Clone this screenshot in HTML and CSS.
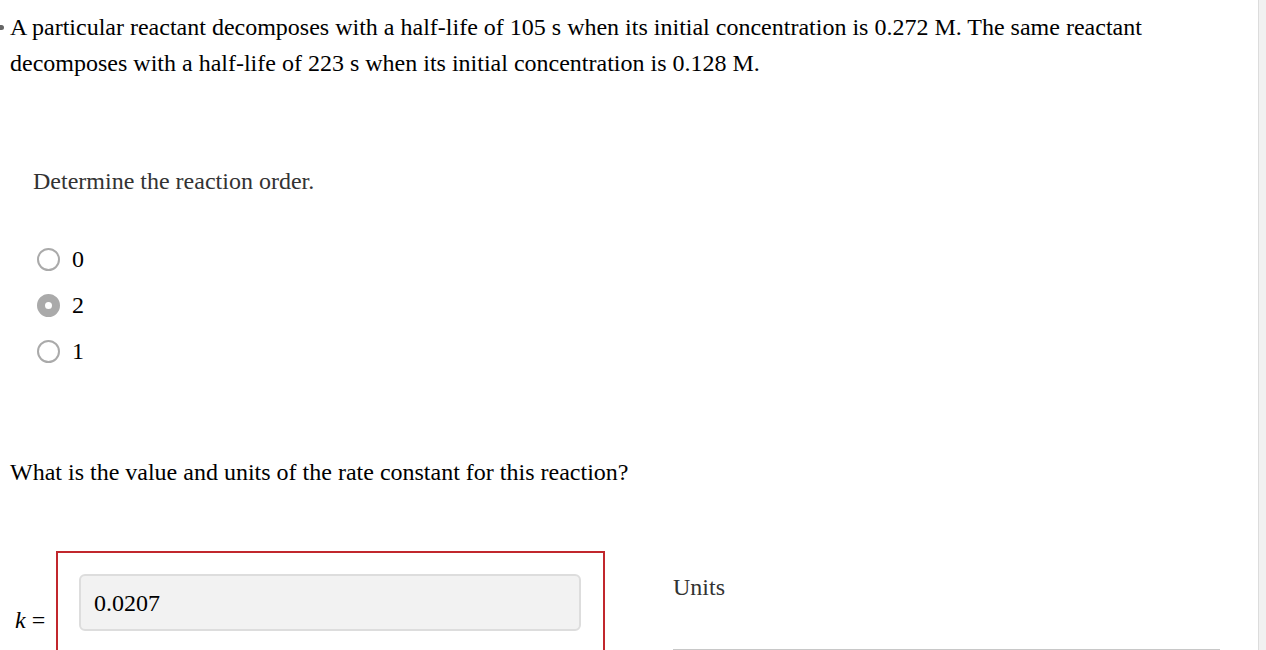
FILE: index.html
```html
<!DOCTYPE html>
<html lang="en">
<head>
    <meta charset="UTF-8">
    <title>Rate constant question</title>
    <link rel="stylesheet" href="styles.css">
</head>
<body>
    <div class="page">
        <div class="main">
            <span class="edge-mark"></span>
            <p class="intro">A particular reactant decomposes with a half-life of 105 s when its initial concentration is 0.272 M. The same reactant decomposes with a half-life of 223 s when its initial concentration is 0.128 M.</p>

            <div class="part">
                <p class="prompt">Determine the reaction order.</p>
                <div class="choices">
                    <label class="choice"><span class="radio"></span>0</label>
                    <label class="choice"><span class="radio checked"></span>2</label>
                    <label class="choice"><span class="radio"></span>1</label>
                </div>
            </div>

            <p class="question">What is the value and units of the rate constant for this reaction?</p>

            <div class="answer-row">
                <div class="k-label"><i>k</i> =</div>
                <div class="answer-box">
                    <div class="answer-input">0.0207</div>
                </div>
                <div class="units">
                    <div class="units-label">Units</div>
                    <div class="units-select"></div>
                </div>
            </div>
        </div>
        <div class="gutter"></div>
    </div>
</body>
</html>
```

FILE: styles.css
```css
body {
    margin: 0;
    padding: 0;
    font-family: "Liberation Serif", "Times New Roman", serif;
    color: #000;
    background: #fff;
    overflow: hidden;
}

.page {
    display: flex;
    height: 650px;
}

.main {
    flex: 1;
    position: relative;
    padding-left: 10px;
}

.gutter {
    width: 7px;
    border-left: 1px solid #dcdcdc;
    background-color: #f1f1f1;
}

/* cut off marker at the left edge */
.edge-mark {
    position: absolute;
    left: 0;
    top: 25px;
    width: 4px;
    height: 5px;
    border-radius: 0 3px 3px 0;
    background-color: #666;
}

.intro {
    margin: 0;
    padding-top: 9px;
    font-size: 24px;
    line-height: 36px;
    width: 1200px;
}

.part {
    padding-left: 23px;
    color: #333;
}

.prompt {
    margin: 82px 0 0;
    font-size: 24px;
    line-height: 36px;
}

.choices {
    margin-top: 48px;
    display: flex;
    flex-direction: column;
    gap: 22px;
}

.choice {
    display: flex;
    align-items: center;
    height: 24px;
    font-size: 24px;
    color: #000;
}

.radio {
    width: 19px;
    height: 19px;
    border: 2px solid #aaa;
    border-radius: 50%;
    margin: 0 12px 0 4px;
    box-sizing: content-box;
}

.radio.checked {
    width: 7px;
    height: 7px;
    border: 8px solid #aaa;
    background-color: #fff;
}

.question {
    margin: 91px 0 0;
    font-size: 24px;
    line-height: 36px;
}

.answer-row {
    display: flex;
    margin-top: 61px;
}

.k-label {
    font-size: 24px;
    width: 46px;
    padding-top: 56px;
    padding-left: 5px;
    box-sizing: border-box;
    white-space: nowrap;
}

.answer-box {
    width: 549px;
    height: 110px;
    border: 2px solid #c1272d;
    border-bottom: none;
    padding: 21px 22px 0 21px;
    box-sizing: border-box;
}

.answer-input {
    height: 57px;
    background-color: #f2f2f2;
    border: 2px solid #ddd;
    border-radius: 6px;
    box-sizing: border-box;
    padding: 14px 13px 0;
    font-size: 24px;
}

.units {
    margin-left: 68px;
    padding-top: 23px;
    width: 547px;
}

.units-label {
    font-size: 24px;
    color: #333;
}

.units-select {
    margin-top: 48px;
    border-top: 2px solid #c8c8c8;
    height: 20px;
}
```
